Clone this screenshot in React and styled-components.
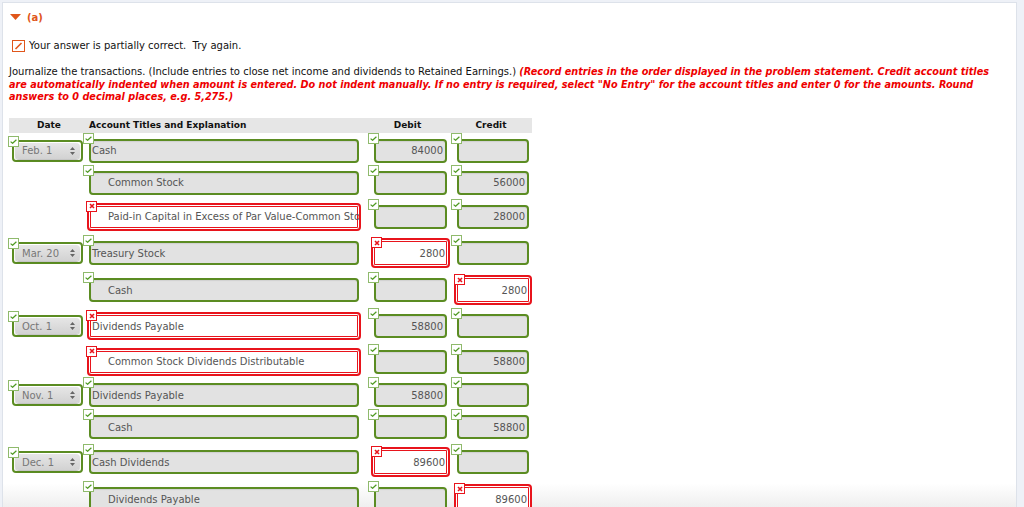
import React from 'react'
import styled, { createGlobalStyle } from 'styled-components'

const GlobalStyle = createGlobalStyle`
  html, body {
    margin: 0;
    padding: 0;
  }
  body {
    background: #eef1f7;
    font-family: 'DejaVu Sans', Verdana, sans-serif;
    overflow: hidden;
  }
`

const rows = [
  { date: 'Feb. 1', account: { text: 'Cash', ok: true }, debit: { value: '84000', ok: true }, credit: { value: '', ok: true } },
  { account: { text: 'Common Stock', ok: true, indent: true }, debit: { value: '', ok: true }, credit: { value: '56000', ok: true } },
  { account: { text: 'Paid-in Capital in Excess of Par Value-Common Stock', ok: false, indent: true }, debit: { value: '', ok: true }, credit: { value: '28000', ok: true } },
  { date: 'Mar. 20', account: { text: 'Treasury Stock', ok: true }, debit: { value: '2800', ok: false }, credit: { value: '', ok: true } },
  { account: { text: 'Cash', ok: true, indent: true }, debit: { value: '', ok: true }, credit: { value: '2800', ok: false } },
  { date: 'Oct. 1', account: { text: 'Dividends Payable', ok: false }, debit: { value: '58800', ok: true }, credit: { value: '', ok: true } },
  { account: { text: 'Common Stock Dividends Distributable', ok: false, indent: true }, debit: { value: '', ok: true }, credit: { value: '58800', ok: true } },
  { date: 'Nov. 1', account: { text: 'Dividends Payable', ok: true }, debit: { value: '58800', ok: true }, credit: { value: '', ok: true } },
  { account: { text: 'Cash', ok: true, indent: true }, debit: { value: '', ok: true }, credit: { value: '58800', ok: true } },
  { date: 'Dec. 1', account: { text: 'Cash Dividends', ok: true }, debit: { value: '89600', ok: false }, credit: { value: '', ok: true } },
  { account: { text: 'Dividends Payable', ok: true, indent: true }, debit: { value: '', ok: true }, credit: { value: '89600', ok: false } },
]

const Panel = styled.div`
  margin: 2px 0 0 2px;
  width: 1015px;
  min-height: 600px;
  box-sizing: border-box;
  background: linear-gradient(to bottom, #fff 95.3%, #efefef 100%) fixed;
  border: 1px solid #dde2ea;
  padding: 8px 0 0 6px;
`

const PartHead = styled.div`
  display: flex;
  align-items: center;
  gap: 6px;
  height: 12px;
  margin-left: 1px;
  color: #e0561b;
  font-size: 10px;
  font-weight: bold;
`

const Feedback = styled.div`
  display: flex;
  align-items: center;
  gap: 4px;
  height: 13px;
  margin: 16px 0 0 3px;
  font-size: 10px;
  color: #111;
`

const PencilBox = styled.span`
  display: flex;
  align-items: center;
  justify-content: center;
  width: 13px;
  height: 12px;
  box-sizing: border-box;
  border: 1px solid #e0561b;
  background: #fff;
`

const Instructions = styled.p`
  margin: 14px 0 0 0;
  width: 995px;
  font-size: 10px;
  line-height: 12.5px;
  color: #111;
`

const Emph = styled.span`
  color: #ee0000;
  font-size: 9.7px;
  font-weight: bold;
  font-style: italic;
`

const Grid = styled.div`
  display: grid;
  width: 523px;
  grid-template-columns: 80px 285px 83px 75px;
`

const HeaderRow = styled(Grid)`
  margin-top: 14px;
  height: 15px;
  align-items: center;
  background: #e6e6e6;
  font-size: 9px;
  font-weight: bold;
  color: #111;
`

const HeadCell = styled.div`
  text-align: ${p => p.$align || 'center'};
  padding-right: ${p => p.$shift || 0}px;
`

const Row = styled(Grid)`
  align-items: start;
  padding-top: ${p => 6 + p.$top}px;
  padding-bottom: ${p => 2 + p.$bottom}px;
`

const Field = styled.div`
  position: relative;
  width: ${p => p.$w}px;
  height: 24px;
`

const Box = styled.div`
  box-sizing: border-box;
  border-radius: 4px;
  display: flex;
  align-items: center;
  white-space: nowrap;
  overflow: hidden;
  font-size: 10px;
  color: #555;
  justify-content: ${p => (p.$right ? 'flex-end' : 'flex-start')};
  background: ${p => (p.$ok ? '#e2e2e2' : '#fff')};
  border: 2px solid ${p => (p.$ok ? '#5b8c22' : '#e8141c')};
  box-shadow: ${p => (p.$ok ? 'inset 0 1px 1px rgba(0,0,0,0.08)' : 'inset 0 0 0 1px #fff, inset 0 0 0 2px #e8141c')};
  margin: ${p => (p.$ok ? '0' : `-${p.$grow}px -${p.$grow}px`)};
  height: ${p => (p.$ok ? '100%' : `calc(100% + ${p.$grow * 2}px)`)};
  padding: ${p => {
    const base = p.$ok ? 1 : 2
    if (p.$right) return `0 ${base + 1}px 0 0`
    return `0 0 0 ${base + (p.$indent ? 16 : 0) + (p.$ok ? 0 : 1)}px`
  }};
`

const Badge = styled.span`
  position: absolute;
  z-index: 2;
  top: ${p => (p.$ok ? -6 : -4)}px;
  left: ${p => (p.$ok ? -6 : -3)}px;
  width: 11px;
  height: 11px;
  box-sizing: border-box;
  background: #fff;
  border: 1px solid ${p => (p.$ok ? '#8fba6c' : '#e8141c')};
  display: flex;
  align-items: center;
  justify-content: center;
`

const DateField = styled.div`
  position: relative;
  width: 71px;
  height: 22px;
  margin: 1px 0 0 3px;
  box-sizing: border-box;
  border: 2px solid #5b8c22;
  border-radius: 4px;
  padding: 1px;
  background: #fff;
`

const Select = styled.div`
  height: 100%;
  box-sizing: border-box;
  border-radius: 4px;
  background: linear-gradient(#e6e6e6, #d2d2d2);
  box-shadow: 0 1px 1px rgba(0, 0, 0, 0.25);
  display: flex;
  align-items: center;
  justify-content: space-between;
  padding: 0 5px 0 7px;
  font-size: 10px;
  color: #777;
`

const Mark = ({ ok }) => (
  <Badge $ok={ok}>
    {ok ? (
      <svg width="7" height="5" viewBox="0 0 7 5">
        <polyline points="0.6,2.6 2.6,4.3 6.4,0.7" fill="none" stroke="#4f9a22" strokeWidth="1.2" />
      </svg>
    ) : (
      <svg width="6" height="6" viewBox="0 0 6 6">
        <path d="M1 1 L5 5 M5 1 L1 5" stroke="#e8141c" strokeWidth="1.6" />
      </svg>
    )}
  </Badge>
)

const Entry = ({ width, ok, right, indent, grow, children }) => (
  <Field $w={width}>
    <Mark ok={ok} />
    <Box $ok={ok} $right={right} $indent={indent} $grow={grow}>
      {children}
    </Box>
  </Field>
)

const Arrows = () => (
  <svg width="5" height="8" viewBox="0 0 5 8">
    <path d="M2.5 0 L5 3 L0 3 Z M0 5 L5 5 L2.5 8 Z" fill="#666" />
  </svg>
)

const DateSelect = ({ value }) => (
  <DateField>
    <Mark ok />
    <Select>
      <span>{value}</span>
      <Arrows />
    </Select>
  </DateField>
)

const JournalRow = ({ row }) => {
  const amountBad = !row.debit.ok || !row.credit.ok
  const accountBad = !row.account.ok
  const top = amountBad ? 3 : accountBad ? 2 : 0
  const bottom = amountBad ? 2 : accountBad ? 1.5 : 0
  return (
    <Row $top={top} $bottom={bottom}>
      <div>{row.date && <DateSelect value={row.date} />}</div>
      <Entry width={270} ok={row.account.ok} indent={row.account.indent} grow={2}>
        {row.account.text}
      </Entry>
      <Entry width={73} ok={row.debit.ok} right grow={3}>
        {row.debit.value}
      </Entry>
      <Entry width={72} ok={row.credit.ok} right grow={3}>
        {row.credit.value}
      </Entry>
    </Row>
  )
}

export default function App() {
  return (
    <>
      <GlobalStyle />
      <Panel>
        <PartHead>
          <svg width="11" height="6" viewBox="0 0 11 6">
            <path d="M0 0 L11 0 L5.5 6 Z" fill="#e0561b" />
          </svg>
          <span>(a)</span>
        </PartHead>
        <Feedback>
          <PencilBox>
            <svg width="9" height="8" viewBox="0 0 9 8">
              <path d="M1.5 7 L7.5 1" stroke="#e0561b" strokeWidth="1.6" />
            </svg>
          </PencilBox>
          <span>Your answer is partially correct.&nbsp; Try again.</span>
        </Feedback>
        <Instructions>
          Journalize the transactions. (Include entries to close net income and dividends to Retained Earnings.){' '}
          <Emph>
            (Record entries in the order displayed in the problem statement. Credit account titles are automatically
            indented when amount is entered. Do not indent manually. If no entry is required, select "No Entry" for the
            account titles and enter 0 for the amounts. Round answers to 0 decimal places, e.g. 5,275.)
          </Emph>
        </Instructions>
        <HeaderRow>
          <HeadCell>Date</HeadCell>
          <HeadCell $align="left">Account Titles and Explanation</HeadCell>
          <HeadCell $shift={16}>Debit</HeadCell>
          <HeadCell $shift={7}>Credit</HeadCell>
        </HeaderRow>
        {rows.map((row, i) => (
          <JournalRow key={i} row={row} />
        ))}
      </Panel>
    </>
  )
}
